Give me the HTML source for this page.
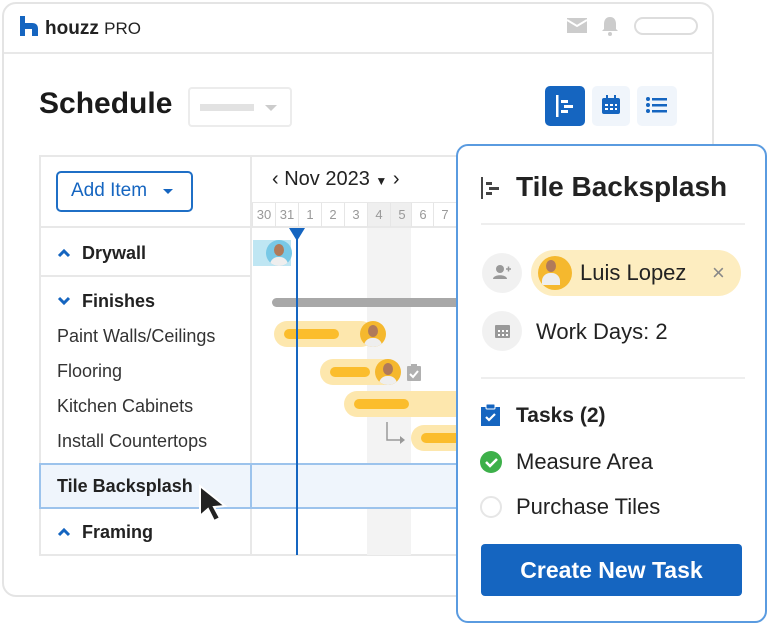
<!DOCTYPE html>
<html><head><meta charset="utf-8"><style>
*{margin:0;padding:0;box-sizing:border-box}
body{width:768px;height:625px;background:#fff;position:relative;overflow:hidden;font-family:"Liberation Sans",sans-serif;color:#222}
.a{position:absolute}
.win{left:2px;top:2px;width:712px;height:595px;border:2px solid #e4e4e4;border-radius:14px;background:#fff}
.t{position:absolute;white-space:nowrap}
.day{position:absolute;top:203px;height:24px;width:23px;border-left:1px solid #e6e6e6;font-size:13px;color:#999;text-align:center;line-height:24px}
.bar{position:absolute;height:26px;border-radius:13px;background:#fde7ad}
.bar i{position:absolute;left:10px;top:8px;height:10px;border-radius:5px;background:#fbbd2c}
.av{position:absolute;width:26px;height:26px;border-radius:50%;background:#f5b82e;overflow:hidden}
.av:before{content:"";position:absolute;left:8px;top:4px;width:10px;height:12px;border-radius:50%;background:#b07a5a}
.av:after{content:"";position:absolute;left:4px;top:17px;width:18px;height:12px;border-radius:8px 8px 0 0;background:#eee}
.ch{position:absolute;left:57px}
</style></head><body>
<div class="a win"></div>
<div class="a" style="left:4px;top:52px;width:708px;height:2px;background:#e8e8e8"></div>
<svg class="a" style="left:20px;top:16px" width="18" height="20" viewBox="0 0 18 20"><path d="M0 0h5v7h7c4 0 6 2 6 6v7h-6v-7H5v7H0z" fill="#1565c0"/></svg>
<div class="t" style="left:45px;top:18px;font-size:19px;font-weight:bold;color:#222">houzz <span style="font-weight:normal;font-size:17px">PRO</span></div>
<svg class="a" style="left:567px;top:18px" width="20" height="15"><path d="M0 0h20v15H0z" fill="#ccc"/><path d="M0 2l10 6 10-6" stroke="#fff" stroke-width="2" fill="none"/></svg>
<svg class="a" style="left:600px;top:16px" width="20" height="20"><path d="M10 1c4 0 6 3 6 7v5l2 2H2l2-2V8c0-4 2-7 6-7z" fill="#ccc"/><circle cx="10" cy="18" r="2" fill="#ccc"/></svg>
<div class="a" style="left:634px;top:17px;width:64px;height:18px;border:2px solid #ddd;border-radius:10px"></div>
<div class="t" style="left:39px;top:87px;font-size:30px;font-weight:bold;color:#1a1a1a">Schedule</div>
<div class="a" style="left:188px;top:87px;width:104px;height:40px;border:2px solid #ececec;border-radius:4px"></div>
<div class="a" style="left:200px;top:104px;width:54px;height:7px;background:#e2e2e2"></div>
<div class="a" style="left:265px;top:105px;border-left:6px solid transparent;border-right:6px solid transparent;border-top:6px solid #ccc"></div>
<div class="a" style="left:545px;top:86px;width:40px;height:40px;background:#1565c0;border-radius:5px"></div>
<svg class="a" style="left:555px;top:95px" width="20" height="22"><rect x="1" y="0" width="2.5" height="22" fill="#fff"/><rect x="6" y="5" width="7" height="3" fill="#fff"/><rect x="9" y="10" width="9" height="3" fill="#fff"/><rect x="6" y="15" width="7" height="3" fill="#fff"/></svg>
<div class="a" style="left:592px;top:86px;width:38px;height:40px;background:#f0f5fb;border-radius:5px"></div>
<svg class="a" style="left:601px;top:95px" width="20" height="20"><rect x="1" y="3" width="18" height="16" rx="2" fill="#1565c0"/><rect x="5" y="0" width="2" height="4" fill="#1565c0"/><rect x="13" y="0" width="2" height="4" fill="#1565c0"/><g fill="#fff"><rect x="4" y="9" width="3" height="2"/><rect x="9" y="9" width="3" height="2"/><rect x="14" y="9" width="2" height="2"/><rect x="4" y="13" width="3" height="2"/><rect x="9" y="13" width="3" height="2"/><rect x="14" y="13" width="2" height="2"/></g></svg>
<div class="a" style="left:637px;top:86px;width:40px;height:40px;background:#f0f5fb;border-radius:5px"></div>
<svg class="a" style="left:646px;top:97px" width="22" height="16"><g fill="#1565c0"><circle cx="2" cy="2" r="2"/><circle cx="2" cy="8" r="2"/><circle cx="2" cy="14" r="2"/><rect x="6" y="1" width="15" height="2.5"/><rect x="6" y="7" width="15" height="2.5"/><rect x="6" y="13" width="15" height="2.5"/></g></svg>
<div class="a" style="left:39px;top:155px;width:430px;height:401px;border:2px solid #e8e8e8;border-right:none"></div>
<div class="a" style="left:250px;top:155px;width:2px;height:401px;background:#e8e8e8"></div>
<div class="a" style="left:367px;top:227px;width:44px;height:328px;background:#f3f3f3"></div>
<div class="a" style="left:367px;top:203px;width:44px;height:24px;background:#efefef"></div>
<div class="a" style="left:41px;top:226px;width:420px;height:2px;background:#e8e8e8"></div>
<div class="a" style="left:41px;top:275px;width:210px;height:2px;background:#e8e8e8"></div>
<div class="a" style="left:252px;top:202px;width:210px;height:1px;background:#e8e8e8"></div>
<div class="day" style="left:252px">30</div><div class="day" style="left:275px">31</div><div class="day" style="left:298px">1</div><div class="day" style="left:321px">2</div><div class="day" style="left:344px">3</div><div class="day" style="left:367px">4</div><div class="day" style="left:390px">5</div><div class="day" style="left:411px">6</div><div class="day" style="left:433px">7</div>
<div class="t" style="left:272px;top:168px;font-size:20px;color:#222">‹ Nov 2023 <span style="font-size:12px">▼</span> ›</div>
<div class="a" style="left:56px;top:171px;width:137px;height:41px;border:2px solid #1f6fc6;border-radius:5px"></div>
<div class="t" style="left:71px;top:180px;font-size:19px;color:#1565c0">Add Item</div>
<div class="a" style="left:163px;top:189px;border-left:5px solid transparent;border-right:5px solid transparent;border-top:5px solid #1565c0"></div>
<div class="a" style="left:39px;top:463px;width:422px;height:46px;background:#eff5fc;border-top:2px solid #9cc3ec;border-bottom:2px solid #9cc3ec"></div>
<div class="a" style="left:39px;top:463px;width:2px;height:46px;background:#9cc3ec"></div>
<div class="a" style="left:250px;top:465px;width:2px;height:42px;background:#9cc3ec"></div>
<svg class="ch" style="top:248px" width="14" height="10"><path d="M2 8l5-5 5 5" stroke="#1565c0" stroke-width="3" fill="none"/></svg>
<svg class="ch" style="top:296px" width="14" height="10"><path d="M2 2l5 5 5-5" stroke="#1565c0" stroke-width="3" fill="none"/></svg>
<svg class="ch" style="top:527px" width="14" height="10"><path d="M2 8l5-5 5 5" stroke="#1565c0" stroke-width="3" fill="none"/></svg>
<div class="t" style="left:82px;top:243px;font-size:18px;font-weight:bold">Drywall</div>
<div class="t" style="left:82px;top:291px;font-size:18px;font-weight:bold">Finishes</div>
<div class="t" style="left:57px;top:326px;font-size:18px;color:#333">Paint Walls/Ceilings</div>
<div class="t" style="left:57px;top:361px;font-size:18px;color:#333">Flooring</div>
<div class="t" style="left:57px;top:396px;font-size:18px;color:#333">Kitchen Cabinets</div>
<div class="t" style="left:57px;top:431px;font-size:18px;color:#333">Install Countertops</div>
<div class="t" style="left:57px;top:476px;font-size:18px;font-weight:bold">Tile Backsplash</div>
<div class="t" style="left:82px;top:522px;font-size:18px;font-weight:bold">Framing</div>
<svg class="a" style="left:198px;top:484px" width="36" height="40"><path d="M2 2l0 30 8-7 6 12 6-3-6-11 11-1z" fill="#222" stroke="#fff" stroke-width="2"/></svg>
<div class="a" style="left:253px;top:240px;width:38px;height:26px;background:#bfe6f3"></div>
<div class="av" style="left:266px;top:240px;background:#78c8e6"></div>
<div class="a" style="left:272px;top:298px;width:190px;height:9px;border-radius:5px;background:#a8a8a8"></div>
<div class="bar" style="left:274px;top:321px;width:100px"><i style="width:55px"></i></div>
<div class="av" style="left:360px;top:321px"></div>
<div class="bar" style="left:320px;top:359px;width:80px"><i style="width:40px"></i></div>
<div class="av" style="left:375px;top:359px"></div>
<svg class="a" style="left:407px;top:364px" width="14" height="17"><rect x="0" y="2" width="14" height="15" rx="1" fill="#b0b0b0"/><rect x="4" y="0" width="6" height="4" fill="#b0b0b0"/><path d="M3 10l3 3 5-6" stroke="#fff" stroke-width="2" fill="none"/></svg>
<div class="bar" style="left:344px;top:391px;width:120px;border-radius:13px 0 0 13px"><i style="width:55px"></i></div>
<svg class="a" style="left:385px;top:422px" width="22" height="22"><path d="M2 0v18h16" stroke="#999" stroke-width="1.5" fill="none"/><path d="M15 14l5 4-5 4z" fill="#999"/></svg>
<div class="bar" style="left:411px;top:425px;width:52px;border-radius:13px 0 0 13px"><i style="width:45px"></i></div>
<div class="a" style="left:296px;top:236px;width:2px;height:319px;background:#1565c0"></div>
<div class="a" style="left:289px;top:228px;border-left:8px solid transparent;border-right:8px solid transparent;border-top:13px solid #1565c0"></div>
<div class="a" style="left:456px;top:144px;width:311px;height:479px;border:2px solid #5a9be0;border-radius:12px;background:#fff"></div>
<svg class="a" style="left:481px;top:177px" width="22" height="22"><rect x="0" y="0" width="2" height="22" fill="#444"/><rect x="5" y="5" width="6" height="3" fill="#444"/><rect x="8" y="10" width="10" height="3" fill="#444"/><rect x="5" y="15" width="6" height="3" fill="#444"/></svg>
<div class="t" style="left:516px;top:171px;font-size:28px;font-weight:bold;color:#222">Tile Backsplash</div>
<div class="a" style="left:481px;top:223px;width:264px;height:2px;background:#eee"></div>
<div class="a" style="left:482px;top:253px;width:40px;height:40px;border-radius:50%;background:#f1f1f1"></div>
<svg class="a" style="left:493px;top:264px" width="18" height="16"><circle cx="7" cy="5" r="4" fill="#999"/><path d="M0 15c0-5 14-5 14 0z" fill="#999"/><path d="M13 5h5M15.5 2.5v5" stroke="#999" stroke-width="1.5"/></svg>
<div class="a" style="left:531px;top:250px;width:210px;height:46px;border-radius:23px;background:#fdedc0"></div>
<div class="av" style="left:538px;top:256px;width:34px;height:34px"></div>
<div class="t" style="left:580px;top:260px;font-size:22px;color:#222">Luis Lopez</div>
<div class="t" style="left:712px;top:260px;font-size:22px;color:#888">×</div>
<div class="a" style="left:482px;top:311px;width:40px;height:40px;border-radius:50%;background:#f1f1f1"></div>
<svg class="a" style="left:495px;top:323px" width="15" height="15"><rect x="0" y="2" width="15" height="13" rx="1" fill="#999"/><g fill="#fff"><rect x="3" y="7" width="2" height="2"/><rect x="7" y="7" width="2" height="2"/><rect x="11" y="7" width="2" height="2"/><rect x="3" y="11" width="2" height="2"/><rect x="7" y="11" width="2" height="2"/><rect x="11" y="11" width="2" height="2"/></g></svg>
<div class="t" style="left:536px;top:319px;font-size:22px;color:#222">Work Days: 2</div>
<div class="a" style="left:481px;top:377px;width:264px;height:2px;background:#eee"></div>
<svg class="a" style="left:481px;top:404px" width="19" height="22"><rect x="0" y="3" width="19" height="19" fill="#1565c0"/><rect x="5" y="0" width="9" height="5" rx="1" fill="#1565c0" stroke="#fff" stroke-width="1"/><path d="M5 13l3 3 6-6" stroke="#fff" stroke-width="2.2" fill="none"/></svg>
<div class="t" style="left:516px;top:404px;font-size:21px;font-weight:bold;color:#222">Tasks (2)</div>
<svg class="a" style="left:480px;top:451px" width="22" height="22"><circle cx="11" cy="11" r="11" fill="#3db04a"/><path d="M6 11l4 4 7-7" stroke="#fff" stroke-width="2.5" fill="none"/></svg>
<div class="t" style="left:516px;top:449px;font-size:22px;color:#222">Measure Area</div>
<div class="a" style="left:480px;top:496px;width:22px;height:22px;border-radius:50%;border:2px solid #e6e6e6"></div>
<div class="t" style="left:516px;top:494px;font-size:22px;color:#222">Purchase Tiles</div>
<div class="a" style="left:481px;top:544px;width:261px;height:52px;border-radius:4px;background:#1565c0"></div>
<div class="t" style="left:481px;top:557px;width:261px;text-align:center;font-size:23px;font-weight:bold;color:#fff">Create New Task</div>
</body></html>
